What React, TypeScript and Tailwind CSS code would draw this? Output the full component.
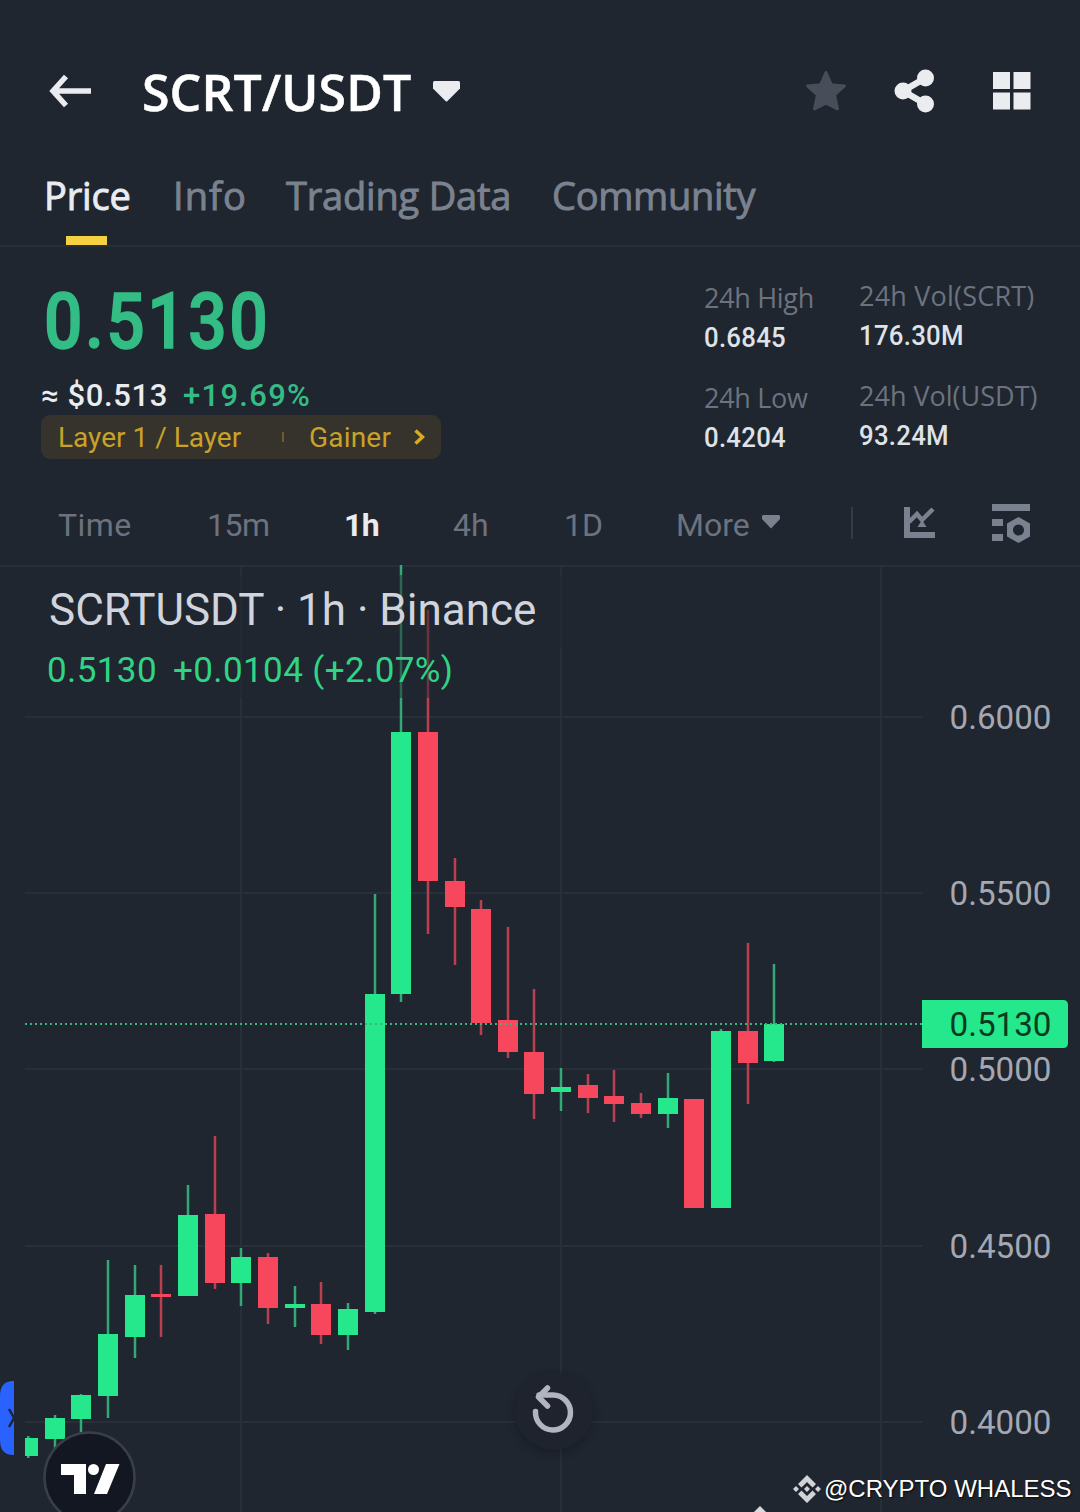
type Candle = {
  x: number;
  high: number;
  top: number;
  bottom: number;
  low: number;
  up: boolean;
};

const c = (x: number, high: number, top: number, bottom: number, low: number, up = true): Candle => ({ x, high, top, bottom, low, up });

const candles: Candle[] = [
  c(55, 1415, 1418, 1439, 1449),
  c(81, 1394, 1395, 1419, 1436),
  c(108, 1260, 1334, 1396, 1418),
  c(135, 1265, 1295, 1337, 1358),
  c(161, 1265, 1294, 1297, 1337, false),
  c(188, 1185, 1215, 1296, 1296),
  c(215, 1136, 1214, 1283, 1289, false),
  c(241, 1248, 1257, 1283, 1306),
  c(268, 1253, 1257, 1308, 1324, false),
  c(295, 1286, 1304, 1308, 1327),
  c(321, 1282, 1304, 1335, 1344, false),
  c(348, 1303, 1309, 1335, 1350),
  c(375, 894, 994, 1312, 1314),
  c(401, 565, 732, 994, 1002),
  c(428, 610, 732, 881, 934, false),
  c(455, 858, 881, 907, 965, false),
  c(481, 900, 909, 1023, 1035, false),
  c(508, 927, 1020, 1052, 1058, false),
  c(534, 989, 1052, 1094, 1119, false),
  c(561, 1068, 1087, 1092, 1111),
  c(588, 1074, 1085, 1098, 1113, false),
  c(614, 1070, 1096, 1104, 1122, false),
  c(641, 1093, 1103, 1114, 1118, false),
  c(668, 1073, 1098, 1114, 1128),
  c(694, 1099, 1099, 1208, 1208, false),
  c(721, 1029, 1031, 1208, 1208),
  c(748, 943, 1031, 1063, 1104, false),
  c(774, 964, 1024, 1061, 1062),
];

const priceLevels = [
  { label: '0.6000', y: 717 },
  { label: '0.5500', y: 893 },
  { label: '0.5000', y: 1069 },
  { label: '0.4500', y: 1246 },
  { label: '0.4000', y: 1422 },
];

const tabs = [
  { label: 'Price', className: 'w-[87px] text-[#eaecef] tracking-[-0.2px]' },
  { label: 'Info', className: 'w-[71px] text-[#7b828f] tracking-[1.1px]' },
  { label: 'Trading Data', className: 'w-[224px] text-[#7b828f] tracking-[-0.2px]' },
  { label: 'Community', className: 'w-[204px] text-[#7b828f] tracking-[-0.3px]' },
];

const intervals = [
  { label: 'Time', className: 'w-[149px] tracking-[0.4px]' },
  { label: '15m', className: 'w-[137px] tracking-[-0.5px]' },
  { label: '1h', className: 'w-[109px] font-bold tracking-[-0.5px] text-[#eaecef]' },
  { label: '4h', className: 'w-[111px]' },
  { label: '1D', className: 'w-[112px]' },
];

const Header = () => (
  <header className="flex h-[145px] items-center pt-[37px] pl-[48px]">
    <svg width="44" height="34" viewBox="0 0 44 34" fill="none" stroke="#eaecef" strokeWidth="5.5">
      <path d="M18 2.500 5 17l13 14.500M5 17h38" />
    </svg>
    <h1 className="mt-[2px] ml-[50px] w-[291px] text-[50px] leading-[60px] font-semibold tracking-[0.1px] whitespace-nowrap text-white [-webkit-text-stroke:0.5px_currentColor]">SCRT/USDT</h1>
    <svg width="27" height="21" viewBox="0 0 27 21" fill="#eaecef">
      <path d="M1.500 0h24q1.500 0 1.500 1.500v6L14.500 20q-1 1-2 0L0 7.500v-6Q0 0 1.500 0z" />
    </svg>
    <svg className="ml-[345px]" width="42" height="42" viewBox="0 0 42 42" fill="#474d59" stroke="#474d59" strokeWidth="3" strokeLinejoin="round">
      <path d="M21 2.500l5.300 12.200 13.200 1.200-10 8.900 3 14L21 33.200l-11.500 5.600 3-14-10-8.900 13.200-1.200z" />
    </svg>
    <svg className="ml-[47px]" width="42" height="44" viewBox="0 0 42 44" fill="#eaecef">
      <path d="M31.500 9 9 22l22.500 13" fill="none" stroke="#eaecef" strokeWidth="6.500" />
      <circle cx="9" cy="22" r="8.500" />
      <circle cx="31.500" cy="9" r="8.500" />
      <circle cx="31.500" cy="35" r="8.500" />
    </svg>
    <svg className="ml-[57px]" width="38" height="38" viewBox="0 0 38 38" fill="#eaecef">
      <path d="M0 0h17v17H0zM20.500 0h17v17h-17zM0 20.500h17v17H0zM20.500 20.500h17v17h-17z" />
    </svg>
  </header>
);

const Stat = ({ label, value, className }: { label: string; value: string; className: string }) => (
  <div className={className}>
    <div className="text-[27px] leading-[38px] whitespace-nowrap text-[#6c737f]">{label}</div>
    <div className="origin-left scale-x-[0.92] font-[Roboto] text-[28px] leading-[41px] font-medium tracking-[0.3px] text-[#dfe2e6]">{value}</div>
  </div>
);

const Chart = () => (
  <svg className="block" width="1080" height="947" viewBox="0 565 1080 947">
    <g stroke="#272f38" strokeWidth="2">
      <line x1="0" x2="1080" y1="566" y2="566" />
      {[241, 561, 881].map(x => (
        <line key={x} x1={x} x2={x} y1="565" y2="1512" />
      ))}
      {priceLevels.map(p => (
        <line key={p.label} x1="25" x2="922" y1={p.y} y2={p.y} />
      ))}
    </g>

    <rect x="27" y="1436" width="2.500" height="22" fill="#36a877" />
    <rect x="25" y="1438" width="13" height="18" fill="#25e78b" />
    {candles.map(k => (
      <g key={k.x}>
        <rect x={k.x - 1.25} y={k.high} width="2.500" height={k.low - k.high} fill={k.up ? '#36a877' : '#b8404f'} />
        <rect x={k.x - 10} y={k.top} width="20" height={k.bottom - k.top} fill={k.up ? '#25e78b' : '#f6475d'} />
      </g>
    ))}

    <line x1="25" x2="922" y1="1024" y2="1024" stroke="#3cb37f" strokeWidth="2" strokeDasharray="2 3" />

    {/* price scale */}
    <g fontFamily="Roboto, sans-serif" fontSize="34">
      {priceLevels.map(p => (
        <text key={p.label} x="949.500" y={p.y + 12} fill="#a4a8b2" textLength="102" lengthAdjust="spacingAndGlyphs">{p.label}</text>
      ))}
      <path d="M922 1000h141q5 0 5 5v38q0 5-5 5h-141z" fill="#25e78b" />
      <text x="949.500" y="1036" fill="#0b3a20" textLength="102" lengthAdjust="spacingAndGlyphs">0.5130</text>
    </g>

    {/* drawer handle */}
    <path d="M14 1381v74H12Q0 1454 0 1440v-44q0-14 12-15z" fill="#2962ff" />
    <path d="M9 1409l5 9-5 9" fill="none" stroke="#1a2440" strokeWidth="2.500" />

    {/* TradingView badge */}
    <circle cx="89.500" cy="1477.500" r="45" fill="#131722" stroke="#3a3e49" strokeWidth="2.500" />
    <g fill="#fff">
      <path d="M61 1464h25v30H74v-19H61z" />
      <circle cx="93.500" cy="1469.500" r="5.500" />
      <path d="M106 1464h13.500l-12.500 30H94z" />
    </g>

    <path d="M754 1512l6-6 6 6z" fill="#d8dade" />
  </svg>
);

const ResetButton = () => (
  <button className="absolute top-[807px] left-[515px] flex size-[78px] items-center justify-center rounded-full bg-[#1f232e] shadow-[0_3px_8px_rgba(10,13,20,0.35)]">
    <svg width="48" height="52" viewBox="0 0 48 52" fill="none" stroke="#b2b5be" strokeWidth="5.5" strokeLinecap="round" strokeLinejoin="round">
      <path d="M5.500 26.500A17.500 17.500 0 1 0 23 10H9" />
      <path d="M17.500 3 8.500 12l9 9" />
    </svg>
  </button>
);

const App = () => (
  <div className="h-[1512px] w-[1080px] overflow-hidden bg-[#1f262f] font-['Open_Sans',sans-serif]">
    <Header />

    <nav className="flex h-[102px] gap-[42px] border-b-2 border-[#272e37] pl-[44px] text-[38px] leading-[100px]">
      {tabs.map((tab, i) => (
        <div key={tab.label} className={`relative whitespace-nowrap [-webkit-text-stroke:0.9px_currentColor] ${tab.className}`}>
          {tab.label}
          {i === 0 && <span className="absolute bottom-0 left-[22px] h-[9px] w-[41px] bg-[#f5d142]" />}
        </div>
      ))}
    </nav>

    <section className="flex h-[238px] pl-[41px]">
      <div className="w-[663px] pt-[31px] font-[Roboto]">
        <div className="ml-[3px] origin-left scale-x-[0.88] text-[77px] leading-[88px] font-medium tracking-[2.8px] text-[#33bd85] [-webkit-text-stroke:1.5px_currentColor]">0.5130</div>
        <div className="mt-[9px] flex h-[40px] items-center pt-[2px] text-[31px] font-medium tracking-[0.6px] whitespace-nowrap">
          <span className="w-[142px] text-[#eaecef]">≈ $0.513</span>
          <span className="tracking-[1.3px] text-[#33bd85]">+19.69%</span>
        </div>
        <div className="flex h-[44px] w-[400px] items-center rounded-[9px] bg-[#35332c] pl-[17px] text-[28px] whitespace-nowrap text-[#c9a227]">
          <span className="mt-[2px] w-[224px]">Layer 1 / Layer</span>
          <span className="h-[10px] w-[2px] bg-[#6e5c29]" />
          <span className="mt-[2px] ml-[25px] w-[105px] tracking-[0.2px]">Gainer</span>
          <svg width="11" height="16" viewBox="0 0 11 16" fill="none" stroke="#d9ab20" strokeWidth="3.500">
            <path d="M1.500 1.500 8.500 8l-7 6.500" />
          </svg>
        </div>
      </div>
      <div className="grid w-[340px] grid-cols-[155px_185px] grid-rows-[100px_100px] pt-[30px]">
        <Stat label="24h High" value="0.6845" className="pt-[2px] tracking-[-0.3px]" />
        <Stat label="24h Vol(SCRT)" value="176.30M" className="tracking-[0.2px]" />
        <Stat label="24h Low" value="0.4204" className="pt-[2px] tracking-[-0.3px]" />
        <Stat label="24h Vol(USDT)" value="93.24M" className="" />
      </div>
    </section>

    <div className="flex h-[80px] items-center pl-[58px] font-[Roboto] text-[32px] text-[#6c737f]">
      {intervals.map(item => (
        <span key={item.label} className={item.className}>{item.label}</span>
      ))}
      <span className="w-[86px]">More</span>
      <svg className="mb-[6px]" width="18" height="14" viewBox="0 0 18 14" fill="#7b828f">
        <path d="M1 0h16l1 1v3l-9 9.500L0 4V1z" />
      </svg>
      <span className="mb-[4px] ml-[71px] h-[32px] w-[2px] bg-[#353c47]" />
      <svg className="mb-[5px] ml-[51px]" width="31" height="31" viewBox="0 0 31 31" fill="none" stroke="#7b828f">
        <path d="M3 0v28h28" strokeWidth="6" />
        <path d="M5 15 13 7l5 6L29 2" strokeWidth="4.500" />
        <path d="M18 13l-4.500 7h9z" fill="#7b828f" stroke="none" />
      </svg>
      <svg className="mb-[3px] ml-[57px]" width="38" height="40" viewBox="0 0 38 40" fill="#7b828f">
        <path d="M0 0h38v7H0zM0 15h11v7H0zM0 30h11v7H0z" />
        <path fillRule="evenodd" d="M26.500 13 38 19.500v13L26.500 39 15 32.500v-13zM26.500 20.500a5.500 5.500 0 1 0 .01 0z" />
      </svg>
    </div>

    <main className="relative">
      <Chart />
      <div className="absolute top-[10px] left-[42px] font-[Roboto] whitespace-nowrap">
        <div className="h-[73px] w-[528px] bg-[#1f262f]/50 pl-[7px] text-[44px] leading-[71px] text-[#d1d4dc]">SCRTUSDT · 1h · Binance</div>
        <div className="flex h-[50px] w-[423px] bg-[#1f262f]/50 pl-[5px] text-[35px] leading-[46px] tracking-[0.4px] text-[#2fd585]">
          <span className="w-[126px]">0.5130</span>
          <span>+0.0104 (+2.07%)</span>
        </div>
      </div>
      <ResetButton />
      <div className="absolute top-[907px] left-[792px] flex items-center font-['Liberation_Sans',sans-serif] text-[24px] leading-[34px] whitespace-nowrap text-white [text-shadow:1px_1px_2px_rgba(0,0,0,0.8)]">
        <svg width="30" height="30" viewBox="0 0 30 30" fill="#d2d3d5">
          <path d="M15 1l9 9-3.500 3.500L15 8l-5.500 5.500L6 10zM15 29l9-9-3.500-3.500L15 22l-5.500-5.500L6 20zM4 12l3 3-3 3-3-3zM26 12l3 3-3 3-3-3zM15 12l3 3-3 3-3-3z" />
        </svg>
        <span className="ml-[2px]">@CRYPTO WHALESS</span>
      </div>
    </main>
  </div>
);

export default App;
